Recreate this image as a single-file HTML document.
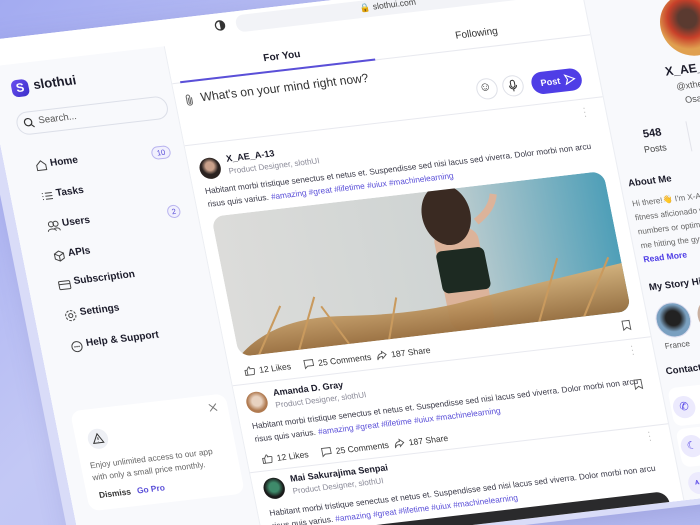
<!DOCTYPE html>
<html style="overflow:hidden;width:700px;height:525px"><head><meta charset="utf-8"><style>
*{box-sizing:border-box;margin:0;padding:0}
body{width:700px;height:525px;overflow:hidden;background:linear-gradient(135deg,#a3abf1 0%,#c3c8f5 40%,#b5bbf2 100%);font-family:"Liberation Sans",sans-serif;color:#1c1c2b;position:relative}
.clip{position:absolute;left:0;top:0;width:700px;height:525px;overflow:hidden}
.w{position:absolute;left:0;top:0;width:1px;height:1px;transform-origin:0 0;transform:matrix(1,-0.117,0.2,1,0,0)}
.a{position:absolute;white-space:nowrap}
.ic{position:absolute}
.nav{font-size:10px;font-weight:bold;color:#1c1c2b}
.txt{font-size:8.2px;color:#3a3a48;line-height:13px}
.tag{color:#5a4fd8}
.sub{font-size:8px;color:#8a8a98}
.nm{font-size:9px;font-weight:bold}
.act{font-size:8.5px;color:#333}
.win{position:absolute;left:-28px;top:38px;width:940px;height:529px;border-radius:16px;overflow:hidden;background:#fff}
</style></head><body><div class="clip">
<div class="w">
 <div class="a" style="left:-28px;top:38px;width:940px;height:529px;background:#fff;border-radius:16px;box-shadow:-10px 6px 0 #d9dcf8,0 10px 30px rgba(80,80,160,.25)"></div>
 <div class="win"><div style="position:absolute;left:28px;top:-38px">
 <svg class="ic" style="left:204px;top:44px" width="12" height="12" viewBox="0 0 12 12"><circle cx="6" cy="6" r="4.5" fill="none" stroke="#333" stroke-width="1.3"/><path d="M6 1.5A4.5 4.5 0 0 1 6 10.5Z" fill="#333"/></svg>
 <div class="a" style="left:226px;top:42px;width:560px;height:17px;background:#f2f3f7;border-radius:8px"></div>
 <div class="a" style="left:350px;top:44px;font-size:8.5px;color:#444">🔒 slothui.com</div>
 <div class="a" style="left:-28px;top:64px;width:180px;height:530px;background:#f8f9fc;border-right:1px solid #eceef3"></div>
 <div class="a" style="left:-6px;top:80px;width:17px;height:17px;border-radius:6px;background:linear-gradient(135deg,#6a4ff0,#3a2fc8);color:#fff;font-weight:bold;font-size:12px;text-align:center;line-height:17px">S</div>
 <div class="a" style="left:16px;top:79px;font-size:13px;font-weight:bold">slothui</div>
 <div class="a" style="left:-8px;top:112px;width:151px;height:23px;border:1px solid #dcdfe8;border-radius:12px;background:#f8f9fc"></div>
 <svg class="ic" style="left:-1px;top:118px" width="11" height="11" viewBox="0 0 11 11"><circle cx="4.6" cy="4.6" r="3.6" fill="none" stroke="#333" stroke-width="1.2"/><path d="M7.3 7.3L10 10" stroke="#333" stroke-width="1.2"/></svg>
 <div class="a" style="left:14px;top:117px;font-size:9.5px;color:#555">Search...</div>

 <svg class="ic" style="left:2px;top:160px" width="12" height="12" viewBox="0 0 12 12"><path d="M1.5 6L6 1.8 10.5 6V11H1.5Z" fill="none" stroke="#444" stroke-width="1"/></svg>
 <div class="a nav" style="left:17px;top:160px">Home</div>
 <div class="a" style="left:118px;top:161px;width:19px;height:13px;border:1px solid #b9b4ef;border-radius:7px;font-size:7.5px;color:#5a4fd8;text-align:center;line-height:11px;background:#f1f0fd">10</div>
 <svg class="ic" style="left:2px;top:191px" width="12" height="12" viewBox="0 0 12 12"><path d="M1 3h1M1 6h1M1 9h1M4 3h7M4 6h7M4 9h7" stroke="#444" stroke-width="1"/></svg>
 <div class="a nav" style="left:17px;top:190px">Tasks</div>
 <svg class="ic" style="left:1px;top:221px" width="14" height="12" viewBox="0 0 14 12"><circle cx="5" cy="4" r="2.5" fill="none" stroke="#444"/><circle cx="9.5" cy="4" r="2.5" fill="none" stroke="#444"/><path d="M1 11c0-3 8-3 8 0M7 9c2-1.5 6-1 6 2" fill="none" stroke="#444"/></svg>
 <div class="a nav" style="left:17px;top:220px">Users</div>
 <div class="a" style="left:122px;top:220px;width:13px;height:13px;border:1px solid #b9b4ef;border-radius:7px;font-size:7.5px;color:#5a4fd8;text-align:center;line-height:11px;background:#f1f0fd">2</div>
 <svg class="ic" style="left:2px;top:251px" width="12" height="12" viewBox="0 0 12 12"><path d="M6 1l4.5 2.5v5L6 11 1.5 8.5v-5Z M1.5 3.5L6 6l4.5-2.5M6 6v5" fill="none" stroke="#444"/></svg>
 <div class="a nav" style="left:17px;top:250px">APIs</div>
 <svg class="ic" style="left:1px;top:280px" width="13" height="12" viewBox="0 0 13 12"><rect x="1" y="2" width="11" height="8" rx="1" fill="none" stroke="#444"/><path d="M1 5h11" stroke="#444"/></svg>
 <div class="a nav" style="left:17px;top:278px">Subscription</div>
 <svg class="ic" style="left:1px;top:310px" width="13" height="13" viewBox="0 0 13 13"><circle cx="6.5" cy="6.5" r="2" fill="none" stroke="#444"/><circle cx="6.5" cy="6.5" r="5" fill="none" stroke="#444" stroke-dasharray="2.5 1.4"/></svg>
 <div class="a nav" style="left:17px;top:309px">Settings</div>
 <svg class="ic" style="left:1px;top:341px" width="13" height="13" viewBox="0 0 13 13"><circle cx="6.5" cy="6.5" r="5" fill="none" stroke="#444"/><path d="M4.5 6.5h.1M6.5 6.5h.1M8.5 6.5h.1" stroke="#444" stroke-width="1.4" stroke-linecap="round"/></svg>
 <div class="a nav" style="left:17px;top:340px">Help &amp; Support</div>

 <div class="a" style="left:-12px;top:410px;width:155px;height:100px;background:#fff;border-radius:10px"></div>
 <div class="a" style="left:0px;top:430px;width:20px;height:20px;border-radius:10px;background:#eef0f5"></div>
 <svg class="ic" style="left:4px;top:434px" width="12" height="11" viewBox="0 0 12 11"><path d="M6 1L11 10H1Z M6 4.5v2.5M6 8.3v.3" fill="none" stroke="#333" stroke-width="1"/></svg>
 <svg class="ic" style="left:124px;top:418px" width="9" height="9" viewBox="0 0 9 9"><path d="M1 1l7 7M8 1l-7 7" stroke="#777" stroke-width="1"/></svg>
 <div class="a" style="left:-3px;top:460px;font-size:8.2px;color:#666;line-height:12px">Enjoy unlimited access to our app<br>with only a small price monthly.</div>
 <div class="a" style="left:0px;top:490px;font-size:8.3px;font-weight:bold;color:#333">Dismiss</div>
 <div class="a" style="left:38px;top:490px;font-size:8.3px;font-weight:bold;color:#5a4fd8">Go Pro</div>

 <div class="a" style="left:152px;top:64px;width:418px;height:530px;background:#fff"></div>
 <div class="a" style="left:152px;top:101px;width:418px;height:1px;background:#e8e9ef"></div>
 <div class="a" style="left:160px;top:100px;width:195px;height:2px;background:#5a4fd8"></div>
 <div class="a" style="left:246px;top:82px;font-size:10px;font-weight:bold">For You</div>
 <div class="a" style="left:438px;top:82px;font-size:10px;color:#333">Following</div>
 <svg class="ic" style="left:161px;top:113px" width="10" height="13" viewBox="0 0 10 13"><path d="M7 4v5a2.5 2.5 0 0 1-5 0V3a1.7 1.7 0 0 1 3.4 0v6a.8.8 0 0 1-1.6 0V4" fill="none" stroke="#666" stroke-width="1"/></svg>
 <div class="a" style="left:177px;top:111px;font-size:12px;color:#333">What's on your mind right now?</div>
 <div class="a" style="left:448px;top:132px;width:21px;height:21px;border:1px solid #dfe1e8;border-radius:11px"></div>
 <div class="a" style="left:451px;top:133px;font-size:12px;color:#333">☺</div>
 <div class="a" style="left:474px;top:132px;width:21px;height:21px;border:1px solid #dfe1e8;border-radius:11px"></div>
 <svg class="ic" style="left:480px;top:136px" width="9" height="13" viewBox="0 0 9 13"><rect x="2.5" y="1" width="4" height="7" rx="2" fill="none" stroke="#333"/><path d="M1 6a3.5 3.5 0 0 0 7 0M4.5 9.5V12" fill="none" stroke="#333"/></svg>
 <div class="a" style="left:503px;top:132px;width:50px;height:22px;border-radius:11px;background:#4f3ee6;color:#fff;font-size:9px;font-weight:bold;line-height:22px;padding-left:9px">Post</div>
 <svg class="ic" style="left:536px;top:137px" width="11" height="11" viewBox="0 0 11 11"><path d="M1 1l9 4.5L1 10l2-4.5Z" fill="none" stroke="#fff" stroke-width="1.1"/></svg>
 <div class="a" style="left:152px;top:163px;width:418px;height:1px;background:#e8e9ef"></div>
 <div class="a" style="left:548px;top:170px;font-size:9px;color:#aaa;line-height:4px">·<br>·<br>·</div>

 <div class="a" style="left:162px;top:178px;width:21px;height:21px;border-radius:11px;background:radial-gradient(circle at 50% 40%,#c9a08a 25%,#2a2220 50%)"></div>
 <div class="a nm" style="left:190px;top:176px">X_AE_A-13</div>
 <div class="a sub" style="left:190px;top:189px">Product Designer, slothUI</div>
 <div class="a txt" style="left:163px;top:204px">Habitant morbi tristique senectus et netus et. Suspendisse sed nisi lacus sed viverra. Dolor morbi non arcu<br>risus quis varius. <span class="tag">#amazing #great #lifetime #uiux #machinelearning</span></div>
 <svg class="ic" style="left:164px;top:236px" width="392" height="140" viewBox="0 0 392 140">
  <defs>
   <clipPath id="c"><rect width="392" height="140" rx="12"/></clipPath>
   <linearGradient id="g1" x1="0" y1="0" x2="1" y2="0"><stop offset="0" stop-color="#dcdcda"/><stop offset=".55" stop-color="#cfd4d3"/><stop offset="1" stop-color="#4f9fb8"/></linearGradient>
   <linearGradient id="g2" x1="0" y1="0" x2="0" y2="1"><stop offset="0" stop-color="#d8b27a"/><stop offset="1" stop-color="#9a6f3e"/></linearGradient>
  </defs>
  <g clip-path="url(#c)">
   <rect width="392" height="140" fill="url(#g1)"/>
   <rect x="213" y="40" width="44" height="100" rx="12" fill="#dcb39a"/>
   <path d="M258 35 q18 -10 22 -25" stroke="#dcb39a" stroke-width="7" fill="none"/>
   <ellipse cx="230" cy="25" rx="24" ry="30" fill="#3a2a22"/>
   <rect x="212" y="60" width="48" height="42" rx="6" fill="#1d2a22"/>
   <path d="M0 140 Q40 105 110 112 T230 112 T392 92 V140 H0Z" fill="url(#g2)" opacity=".95"/>
   <path d="M20 140l30-45M60 140l25-50M300 140l30-60M345 140l35-55M150 140l15-40M110 140l-20-40" stroke="#c99a5e" stroke-width="2"/>
  </g>
 </svg>
 <svg class="ic" style="left:166px;top:386px" width="11" height="10" viewBox="0 0 11 10"><path d="M1 4h2v5H1ZM3 4l2-3c1 0 1.3.8 1 2h3.5c.8 0 1 .6.8 1.2L9.5 8.5C9.3 9 9 9 8.5 9H3" fill="none" stroke="#555" stroke-width=".9"/></svg>
 <div class="a act" style="left:181px;top:386px">12 Likes</div>
 <svg class="ic" style="left:225px;top:386px" width="11" height="10" viewBox="0 0 11 10"><path d="M1 1h9v6H4L1.5 9V1Z" fill="none" stroke="#555" stroke-width=".9"/></svg>
 <div class="a act" style="left:240px;top:386px">25 Comments</div>
 <svg class="ic" style="left:298px;top:386px" width="11" height="10" viewBox="0 0 11 10"><path d="M6 1l4 3.5L6 8V6C3 6 1.5 7 1 9 1 5 3 3 6 3Z" fill="none" stroke="#555" stroke-width=".9"/></svg>
 <div class="a act" style="left:313px;top:386px">187 Share</div>
 <svg class="ic" style="left:544px;top:384px" width="9" height="11" viewBox="0 0 9 11"><path d="M1 1h7v9L4.5 7.5 1 10Z" fill="none" stroke="#555" stroke-width=".9"/></svg>
 <div class="a" style="left:152px;top:403px;width:418px;height:1px;background:#e8e9ef"></div>
 <div class="a" style="left:548px;top:408px;font-size:9px;color:#aaa;line-height:4px">·<br>·<br>·</div>

 <div class="a" style="left:162px;top:412px;width:21px;height:21px;border-radius:11px;background:radial-gradient(circle at 50% 45%,#e8d2c0 30%,#b07a50 60%)"></div>
 <div class="a nm" style="left:190px;top:410px">Amanda D. Gray</div>
 <div class="a sub" style="left:190px;top:423px">Product Designer, slothUI</div>
 <div class="a txt" style="left:163px;top:439px">Habitant morbi tristique senectus et netus et. Suspendisse sed nisi lacus sed viverra. Dolor morbi non arcu<br>risus quis varius. <span class="tag">#amazing #great #lifetime #uiux #machinelearning</span></div>
 <svg class="ic" style="left:544px;top:443px" width="9" height="11" viewBox="0 0 9 11"><path d="M1 1h7v9L4.5 7.5 1 10Z" fill="none" stroke="#555" stroke-width=".9"/></svg>
 <svg class="ic" style="left:166px;top:474px" width="11" height="10" viewBox="0 0 11 10"><path d="M1 4h2v5H1ZM3 4l2-3c1 0 1.3.8 1 2h3.5c.8 0 1 .6.8 1.2L9.5 8.5C9.3 9 9 9 8.5 9H3" fill="none" stroke="#555" stroke-width=".9"/></svg>
 <div class="a act" style="left:181px;top:474px">12 Likes</div>
 <svg class="ic" style="left:225px;top:474px" width="11" height="10" viewBox="0 0 11 10"><path d="M1 1h9v6H4L1.5 9V1Z" fill="none" stroke="#555" stroke-width=".9"/></svg>
 <div class="a act" style="left:240px;top:474px">25 Comments</div>
 <svg class="ic" style="left:298px;top:474px" width="11" height="10" viewBox="0 0 11 10"><path d="M6 1l4 3.5L6 8V6C3 6 1.5 7 1 9 1 5 3 3 6 3Z" fill="none" stroke="#555" stroke-width=".9"/></svg>
 <div class="a act" style="left:313px;top:474px">187 Share</div>
 <div class="a" style="left:152px;top:490px;width:418px;height:1px;background:#e8e9ef"></div>
 <div class="a" style="left:548px;top:494px;font-size:9px;color:#aaa;line-height:4px">·<br>·<br>·</div>

 <div class="a" style="left:162px;top:498px;width:21px;height:21px;border-radius:11px;background:radial-gradient(circle at 50% 45%,#3e8a6a 30%,#1a1a1a 60%)"></div>
 <div class="a nm" style="left:190px;top:496px">Mai Sakurajima Senpai</div>
 <div class="a sub" style="left:190px;top:509px">Product Designer, slothUI</div>
 <div class="a txt" style="left:163px;top:526px">Habitant morbi tristique senectus et netus et. Suspendisse sed nisi lacus sed viverra. Dolor morbi non arcu<br>risus quis varius. <span class="tag">#amazing #great #lifetime #uiux #machinelearning</span></div>
 <div class="a" style="left:164px;top:556px;width:392px;height:40px;background:#2a2a2c;border-radius:12px 12px 0 0"></div>

 <div class="a" style="left:570px;top:64px;width:360px;height:530px;background:#f8f9fc;border-left:1px solid #eceef3"></div>
 <div class="a" style="left:640px;top:72px;width:62px;height:62px;border-radius:31px;background:radial-gradient(circle at 45% 40%,#5a3a30 18%,#c8402a 38%,#e0a050 60%)"></div>
 <div class="a" style="left:636px;top:139px;font-size:12px;font-weight:bold">X_AE_C-921</div>
 <div class="a" style="left:644px;top:157px;font-size:9px;color:#555">@xtheobliterator</div>
 <div class="a" style="left:650px;top:171px;font-size:9px;color:#555">Osaka, Japan</div>
 <div class="a" style="left:602px;top:199px;font-size:11px;font-weight:bold">548</div>
 <div class="a" style="left:600px;top:215px;font-size:9px;color:#444">Posts</div>
 <div class="a" style="left:646px;top:197px;width:1px;height:30px;background:#e2e3ea"></div>
 <div class="a" style="left:660px;top:199px;font-size:11px;font-weight:bold">12.7K</div>
 <div class="a" style="left:660px;top:215px;font-size:9px;color:#444">Followers</div>
 <div class="a" style="left:578px;top:246px;font-size:9.5px;font-weight:bold">About Me</div>
 <div class="a" style="left:578px;top:265px;font-size:8px;color:#666;line-height:14px">Hi there!👋 I'm X-AE-A-13<br>fitness aficionado who<br>numbers or optimizing<br>me hitting the gym.</div>
 <div class="a" style="left:578px;top:322px;font-size:8.5px;font-weight:bold;color:#4f3ee6">Read More</div>
 <div class="a" style="left:578px;top:350px;font-size:9.5px;font-weight:bold">My Story Highlights</div>
 <div class="a" style="left:578px;top:372px;width:35px;height:35px;border-radius:18px;background:radial-gradient(circle at 50% 45%,#222 30%,#7aa0c0 55%);border:1px solid #dde"></div>
 <div class="a" style="left:620px;top:372px;width:35px;height:35px;border-radius:18px;background:#c9b0a0"></div>
 <div class="a" style="left:582px;top:410px;font-size:8px;color:#555">France</div>
 <div class="a" style="left:578px;top:434px;font-size:9.5px;font-weight:bold">Contact</div>
 <div class="a" style="left:576px;top:456px;width:200px;height:38px;border-radius:8px;background:#fff"></div>
 <div class="a" style="left:578px;top:465px;width:22px;height:22px;border-radius:11px;background:#eceafd;color:#4f3ee6;font-size:11px;text-align:center;line-height:22px">✆</div>
 <div class="a" style="left:576px;top:497px;width:200px;height:38px;border-radius:8px;background:#fff"></div>
 <div class="a" style="left:578px;top:504px;width:22px;height:22px;border-radius:11px;background:#eceafd;color:#4f3ee6;font-size:11px;text-align:center;line-height:22px">☾</div>
 <div class="a" style="left:578px;top:541px;width:22px;height:22px;border-radius:11px;background:#eceafd;color:#4f3ee6;font-size:6px;text-align:center;line-height:22px;font-weight:bold">AA</div>
 </div></div>
</div>
</div></body></html>
